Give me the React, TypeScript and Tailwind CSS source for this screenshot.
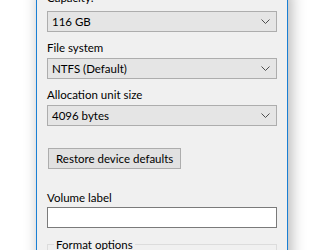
import React from 'react'

function Chevron() {
  return (
    <svg width="9" height="5" viewBox="0 0 9 5" className="shrink-0">
      <polyline points="0.5,0.5 4.5,4.5 8.5,0.5" fill="none" stroke="#4d4d4d" strokeWidth="1" />
    </svg>
  )
}

function Combo({ value }: { value: string }) {
  return (
    <div className="h-[21px] w-full flex items-center justify-between bg-[#e5e5e5] border border-[#adadad] pl-[4px] pr-[6px]">
      <span className="leading-[15px]">{value}</span>
      <Chevron />
    </div>
  )
}

function Label({ text, className = '' }: { text: string; className?: string }) {
  return <div className={`leading-[15px] ${className}`}>{text}</div>
}

export default function App() {
  return (
    <div className="w-[327px] h-[250px] overflow-hidden bg-white" style={{ fontFamily: 'Lato, "Noto Sans", sans-serif' }}>
      <div className="ml-[36px] w-[252px] h-[300px] bg-[#f0f0f0] border-x border-[#1a7fd4] shadow-[3px_0_14px_rgba(0,0,0,0.3)] px-[10px] text-[11.5px] text-black">
        <Label text="Capacity:" className="mt-[-10px]" />
        <div className="mt-[6px]">
          <Combo value="116 GB" />
        </div>

        <Label text="File system" className="mt-[8px]" />
        <div className="mt-[3px]">
          <Combo value="NTFS (Default)" />
        </div>

        <Label text="Allocation unit size" className="mt-[8px]" />
        <div className="mt-[3px]">
          <Combo value="4096 bytes" />
        </div>

        <button
          type="button"
          className="mt-[22px] ml-[1px] h-[21px] w-[133px] bg-[#e1e1e1] border border-[#adadad] text-left pl-[7px] leading-[15px] whitespace-nowrap"
        >
          Restore device defaults
        </button>

        <Label text="Volume label" className="mt-[21px]" />
        <input
          type="text"
          className="mt-[2px] block h-[21px] w-full bg-white border border-[#7a7a7a] outline-none px-[3px]"
        />

        <fieldset className="mt-[9px] border border-[#dcdcdc] h-[60px] pl-[6px]">
          <legend className="px-[2px] leading-[15px]">Format options</legend>
        </fieldset>
      </div>
    </div>
  )
}
